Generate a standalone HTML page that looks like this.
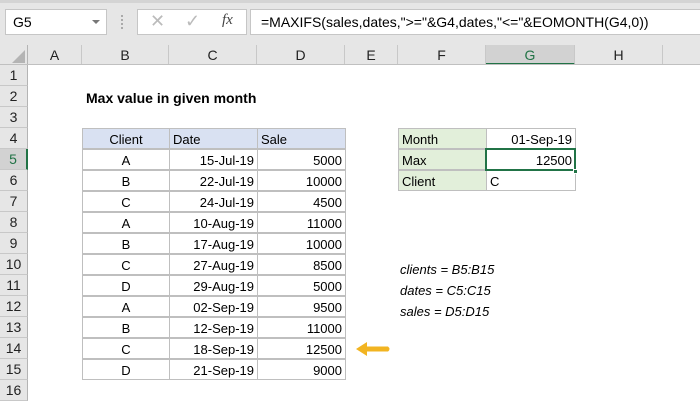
<!DOCTYPE html>
<html><head><style>
*{margin:0;padding:0;box-sizing:border-box}
body{width:700px;height:400px;overflow:hidden;background:#fff;font-family:"Liberation Sans",sans-serif;font-size:13px;color:#000;position:relative}
.a{position:absolute}
.ch{position:absolute;top:45px;height:20px;border-right:1px solid #c8c8c8;text-align:center;line-height:20px;font-size:14px;color:#222;background:#e6e6e6}
.rh{position:absolute;left:0;width:28px;height:21px;border-bottom:1px solid #c8c8c8;border-right:1px solid #b4b4b4;text-align:center;line-height:21px;font-size:14px;color:#222;background:#e6e6e6}
.c{position:absolute;height:21px;line-height:21px;border:1px solid #bfbfbf;padding:0 3px;white-space:nowrap}
.r{text-align:right}.m{text-align:center}
</style></head><body>
<div class="a" style="left:0;top:0;width:700px;height:45px;background:#e6e6e6;border-top:3px solid #d4d4d4"></div>
<div class="a" style="left:5px;top:9px;width:102px;height:26px;background:#fff;border:1px solid #c6c6c6;line-height:24px;padding-left:7px;font-size:14px">G5</div>
<div class="a" style="left:92px;top:20px;width:0;height:0;border-left:4px solid transparent;border-right:4px solid transparent;border-top:4px solid #777"></div>
<div class="a" style="left:121px;top:15px;width:2px;height:14px;border-left:2px dotted #aaa"></div>
<div class="a" style="left:137px;top:9px;width:110px;height:26px;background:#fff;border:1px solid #c6c6c6"></div>
<div class="a" style="left:150px;top:11px;color:#bbb;font-size:18px">✕</div>
<div class="a" style="left:185px;top:11px;color:#bbb;font-size:18px">✓</div>
<div class="a" style="left:222px;top:12px;font-family:'Liberation Serif',serif;font-style:italic;font-size:15px;color:#444">fx</div>
<div class="a" style="left:250px;top:9px;width:452px;height:26px;background:#fff;border:1px solid #c6c6c6;line-height:24px;padding-left:10px;font-size:14px">=MAXIFS(sales,dates,"&gt;="&amp;G4,dates,"&lt;="&amp;EOMONTH(G4,0))</div>

<div class="ch" style="left:0;width:28px;border-right:1px solid #b4b4b4"></div>
<div class="a" style="left:12px;top:50px;width:0;height:0;border-left:13px solid transparent;border-bottom:13px solid #b4b4b4"></div>
<div class="ch" style="left:28px;width:54px">A</div>
<div class="ch" style="left:82px;width:87px">B</div>
<div class="ch" style="left:169px;width:88px">C</div>
<div class="ch" style="left:257px;width:88px">D</div>
<div class="ch" style="left:345px;width:53px">E</div>
<div class="ch" style="left:398px;width:88px">F</div>
<div class="ch" style="left:486px;width:89px;background:#d2d2d2;color:#217346;border-bottom:2px solid #217346">G</div>
<div class="ch" style="left:575px;width:88px">H</div>
<div class="ch" style="left:663px;width:37px;border-right:none"></div>
<div class="a" style="left:0;top:64px;width:700px;height:1px;background:#c0c0c0"></div>

<div class="rh" style="top:65px">1</div><div class="rh" style="top:86px">2</div><div class="rh" style="top:107px">3</div><div class="rh" style="top:128px">4</div>
<div class="rh" style="top:149px;background:#d2d2d2;color:#217346;border-right:2px solid #217346">5</div>
<div class="rh" style="top:170px">6</div><div class="rh" style="top:191px">7</div><div class="rh" style="top:212px">8</div><div class="rh" style="top:233px">9</div><div class="rh" style="top:254px">10</div><div class="rh" style="top:275px">11</div><div class="rh" style="top:296px">12</div><div class="rh" style="top:317px">13</div><div class="rh" style="top:338px">14</div><div class="rh" style="top:359px">15</div><div class="rh" style="top:380px">16</div>

<div class="a" style="left:86px;top:90px;font-weight:bold;font-size:14px">Max value in given month</div>

<div class="c m" style="left:82px;top:128px;width:88px;background:#d9e1f2">Client</div>
<div class="c" style="left:169px;top:128px;width:89px;background:#d9e1f2">Date</div>
<div class="c" style="left:257px;top:128px;width:89px;background:#d9e1f2">Sale</div>

<div class="c m" style="left:82px;top:149px;width:88px">A</div><div class="c r" style="left:169px;top:149px;width:89px">15-Jul-19</div><div class="c r" style="left:257px;top:149px;width:89px">5000</div>
<div class="c m" style="left:82px;top:170px;width:88px">B</div><div class="c r" style="left:169px;top:170px;width:89px">22-Jul-19</div><div class="c r" style="left:257px;top:170px;width:89px">10000</div>
<div class="c m" style="left:82px;top:191px;width:88px">C</div><div class="c r" style="left:169px;top:191px;width:89px">24-Jul-19</div><div class="c r" style="left:257px;top:191px;width:89px">4500</div>
<div class="c m" style="left:82px;top:212px;width:88px">A</div><div class="c r" style="left:169px;top:212px;width:89px">10-Aug-19</div><div class="c r" style="left:257px;top:212px;width:89px">11000</div>
<div class="c m" style="left:82px;top:233px;width:88px">B</div><div class="c r" style="left:169px;top:233px;width:89px">17-Aug-19</div><div class="c r" style="left:257px;top:233px;width:89px">10000</div>
<div class="c m" style="left:82px;top:254px;width:88px">C</div><div class="c r" style="left:169px;top:254px;width:89px">27-Aug-19</div><div class="c r" style="left:257px;top:254px;width:89px">8500</div>
<div class="c m" style="left:82px;top:275px;width:88px">D</div><div class="c r" style="left:169px;top:275px;width:89px">29-Aug-19</div><div class="c r" style="left:257px;top:275px;width:89px">5000</div>
<div class="c m" style="left:82px;top:296px;width:88px">A</div><div class="c r" style="left:169px;top:296px;width:89px">02-Sep-19</div><div class="c r" style="left:257px;top:296px;width:89px">9500</div>
<div class="c m" style="left:82px;top:317px;width:88px">B</div><div class="c r" style="left:169px;top:317px;width:89px">12-Sep-19</div><div class="c r" style="left:257px;top:317px;width:89px">11000</div>
<div class="c m" style="left:82px;top:338px;width:88px">C</div><div class="c r" style="left:169px;top:338px;width:89px">18-Sep-19</div><div class="c r" style="left:257px;top:338px;width:89px">12500</div>
<div class="c m" style="left:82px;top:359px;width:88px">D</div><div class="c r" style="left:169px;top:359px;width:89px">21-Sep-19</div><div class="c r" style="left:257px;top:359px;width:89px">9000</div>

<svg class="a" style="left:354px;top:340px" width="40" height="18"><path d="M2 9 L13 2 L13 6.5 L34 6.5 Q37 9 34 11.5 L13 11.5 L13 16 Z" fill="#f2b421"/></svg>

<div class="c" style="left:398px;top:128px;width:89px;background:#e2efda">Month</div><div class="c r" style="left:486px;top:128px;width:90px">01-Sep-19</div>
<div class="c" style="left:398px;top:149px;width:89px;background:#e2efda">Max</div><div class="c r" style="left:486px;top:149px;width:90px">12500</div>
<div class="c" style="left:398px;top:170px;width:89px;background:#e2efda">Client</div><div class="c" style="left:486px;top:170px;width:90px">C</div>
<div class="a" style="left:485px;top:148px;width:91px;height:23px;border:2px solid #217346"></div>
<div class="a" style="left:573px;top:169px;width:5px;height:5px;background:#217346;border:1px solid #fff"></div>

<div class="a" style="left:400px;top:259px;font-style:italic;line-height:21px">clients = B5:B15<br>dates = C5:C15<br>sales = D5:D15</div>
</body></html>
